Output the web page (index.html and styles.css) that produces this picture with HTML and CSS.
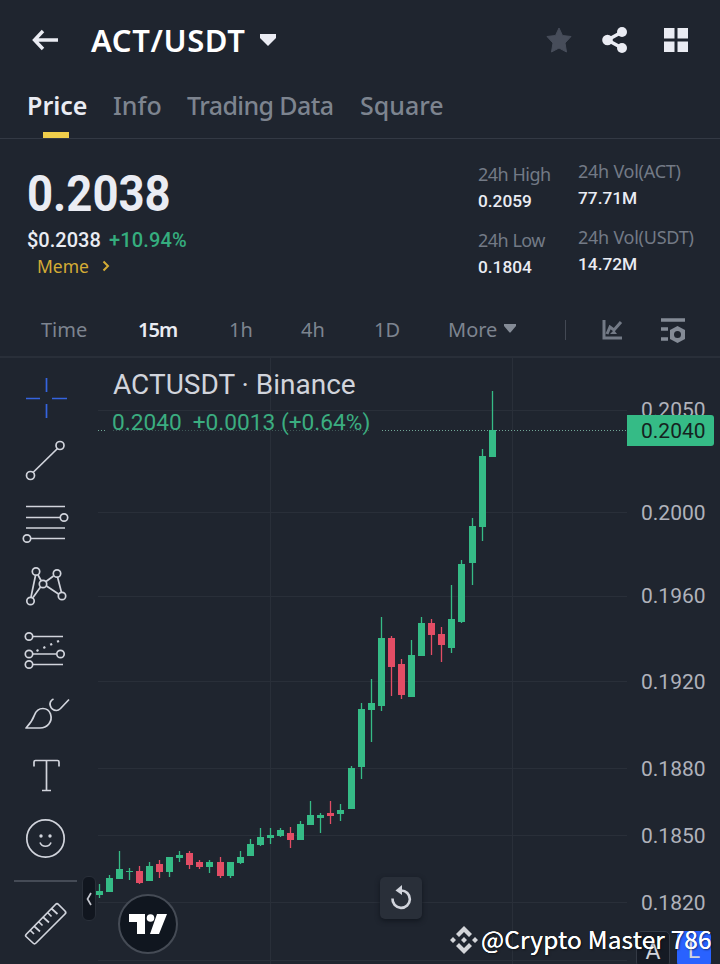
FILE: index.html
```html
<!DOCTYPE html>
<html lang="en">
<head>
<meta charset="utf-8">
<title>ACT/USDT</title>
<link rel="stylesheet" href="styles.css">
</head>
<body>
<main class="app">
  <header class="header">
    <svg class="back" width="28" height="24" viewBox="0 0 28 24"><path d="M27 12H4M12 3L3.500 12L12 21"/></svg>
    <h1 class="pair">ACT/USDT</h1>
    <svg class="caret" width="18" height="14" viewBox="0 0 18 14"><path d="M1 1H17V5L9 13L1 5Z"/></svg>
    <div class="actions">
      <svg class="star" width="28" height="28" viewBox="0 0 28 28"><path d="M14 2L17.500 9.500L26 10.500L20 17L21.500 26L14 22L6.500 26L8 17L2 10.500L10.500 9.500Z"/></svg>
      <svg class="share" width="28" height="28" viewBox="0 0 28 28"><path d="M21 6L6.500 14L21 22"/><circle cx="21" cy="6" r="5"/><circle cx="6.500" cy="14" r="5.300"/><circle cx="21" cy="22" r="5"/></svg>
      <svg class="grid-icon" width="24" height="24" viewBox="0 0 24 24"><path d="M0 0H10.500V10.500H0ZM13.500 0H24V10.500H13.500ZM0 13.500H10.500V24H0ZM13.500 13.500H24V24H13.500Z"/></svg>
    </div>
  </header>

  <nav class="tabs">
    <span class="tab active">Price</span>
    <span class="tab info">Info</span>
    <span class="tab data">Trading Data</span>
    <span class="tab square">Square</span>
  </nav>

  <section class="summary">
    <div class="quote">
      <div class="last">0.2038</div>
      <div class="fiat"><span class="usd">$0.2038</span><span class="change">+10.94%</span></div>
      <div class="tag"><span>Meme</span><svg width="8" height="12" viewBox="0 0 8 12"><path d="M1.500 1.500L6 6L1.500 10.500"/></svg></div>
    </div>
    <div class="stats prices">
      <div class="stat"><span class="label">24h High</span><span class="value">0.2059</span></div>
      <div class="stat"><span class="label">24h Low</span><span class="value">0.1804</span></div>
    </div>
    <div class="stats volumes">
      <div class="stat"><span class="label">24h Vol(ACT)</span><span class="value">77.71M</span></div>
      <div class="stat"><span class="label">24h Vol(USDT)</span><span class="value">14.72M</span></div>
    </div>
  </section>

  <nav class="intervals">
    <span class="iv time">Time</span>
    <span class="iv m15">15m</span>
    <span class="iv h1">1h</span>
    <span class="iv h4">4h</span>
    <span class="iv d1">1D</span>
    <span class="iv more">More</span>
    <svg class="more-caret" width="12" height="9" viewBox="0 0 12 9"><path d="M0 0H12V2L6.500 8.500H5.500L0 2Z"/></svg>
    <i class="divider"></i>
    <svg class="chart-icon" width="22" height="20" viewBox="0 0 22 20"><path d="M2 0V18H20M5 14L8 7L12 10L19 2" fill="none" stroke="#737a86" stroke-width="3"/><path d="M8 14L12 10L15 14Z" fill="#737a86"/></svg>
    <svg class="settings-icon" width="26" height="26" viewBox="0 0 26 26"><path d="M1 3H25M1 12H8M1 22H8" stroke="#848b96" stroke-width="3.600"/><path fill="#848b96" fill-rule="evenodd" d="M17.500 9L25 13V22L17.500 26L10 22V13ZM17.500 14A3.500 3.500 0 1 0 17.500 21A3.500 3.500 0 1 0 17.500 14Z"/></svg>
  </nav>

  <section class="board">
    <aside class="tools">
      <svg class="tool cross" viewBox="0 367 84 63"><path d="M46.500 378V392M46.500 404V418M26 398.500H40M52 398.500H67"/></svg>
      <svg class="tool" viewBox="0 430 84 63"><path d="M33 472.500L57.500 448.500"/><circle cx="30.500" cy="475.500" r="4"/><circle cx="60" cy="445.500" r="4"/></svg>
      <svg class="tool" viewBox="0 493 84 63"><path d="M26 506.500H65M26 517.500H60M26 528H65M31 538.500H65"/><circle cx="64" cy="517.500" r="3.700"/><circle cx="27" cy="538.500" r="3.700"/></svg>
      <svg class="tool" viewBox="0 556 84 63"><path d="M35.500 575.500L31 597M38 575L41 580.500M46 581.500L53.500 576M57.500 577L61.500 592.500M46.500 586L58.500 594M40.500 587L33 597.500"/><circle cx="36" cy="571.500" r="3.700"/><circle cx="57" cy="573.500" r="3.700"/><circle cx="43" cy="584" r="3.700"/><circle cx="30.500" cy="601" r="3.700"/><circle cx="62" cy="596" r="3.700"/></svg>
      <svg class="tool" viewBox="0 619 84 63"><path d="M33 636.500H63M33 654H56M33 664.500H63"/><path class="dots" d="M36.500 651L61 640"/><circle cx="29" cy="636.500" r="3.700"/><circle cx="29" cy="654" r="3.700"/><circle cx="60.500" cy="654" r="3.700"/><circle cx="29" cy="664.500" r="3.700"/></svg>
      <svg class="tool" viewBox="0 682 84 63"><path d="M26 728C31 723 33 719 34.500 715C38 706 48 707 50.500 714C53 722 47 728 40 728ZM53.500 699C47.500 702 50 710 56.500 710.500C58 710.500 59 710 60.500 708.500L69 699.500"/></svg>
      <svg class="tool" viewBox="0 745 84 63"><path d="M34 766.500V762Q34 760.500 35.500 760.500H57.500Q59 760.500 59 762V766.500M46.500 760.500V790.500M42 790.500H51"/></svg>
      <svg class="tool smile" viewBox="0 808 84 63"><circle cx="45.500" cy="838.500" r="18.700"/><path d="M40 842.500C42 847.500 49 847.500 51 842.500"/><circle class="eye" cx="41" cy="836" r="1.700"/><circle class="eye" cx="50" cy="836" r="1.700"/></svg>
      <i class="rule"></i>
      <svg class="tool ruler" viewBox="0 892 84 63"><path d="M26.500 934L55.500 904.500Q57 903 58.500 904.500L65 911Q66.500 912.500 65 914L36 943Q34.500 944.500 33 943L26 936.500Q25 935.500 26.500 934ZM30.500 930.500L34 934M34.500 926.500L40 931.500M39 922L42.500 925.500M43.500 917.500L49 922.500M48 913L51.500 916.500M52 909L57.500 914"/></svg>
    </aside>

    <div class="chart">
      <svg class="plot" width="636" height="607" viewBox="84 357 636 607">
        <path class="gridline" d="M98 410.500H627M98 512.500H627M98 596.500H627M98 681.500H627M98 768.500H627M98 835.500H627M98 902.500H627M98 960.500H627M270.500 358V964M512.500 358V964"/>
        <path class="price-line" d="M98 430.500H107M382 430.500H627"/>
        <path class="price-line faint" d="M113 430.500H370"/>
        <path class="wick up" d="M99.500 884V898M109.500 875V892M119.500 851V879M129.500 868V880M149.500 862V881M169.500 857V877M179.500 851V862M209.500 860V873M230.500 862V878M240.500 851V864M250.500 839V856M260.500 828V846M270.500 828V844M280.500 828V837M300.500 821V840M310.500 801V825M320.500 813V833M340.500 804V821M351.500 766V809M361.500 703V779M371.500 679V742M381.500 617V711M411.500 640V697M421.500 617V656M451.500 585V653M461.500 560V623M472.500 518V585M482.500 449V541M492.500 391V457"/>
        <path class="wick down" d="M139.500 866V884M159.500 860V878M189.500 851V869M199.500 860V869M220.500 857V878M290.500 827V848M330.500 801V824M391.500 636V696M401.500 659V699M431.500 619V655M441.500 627V662"/>
        <path class="body up" d="M99.500 891V895M109.500 878V892M119.500 869V879M129.500 871V872M149.500 866V881M169.500 857V872M179.500 855V858M209.500 862V867M230.500 862V876M240.500 857V863M250.500 844V856M260.500 837V845M270.500 835V838M280.500 830V836M300.500 824V840M310.500 815V825M320.500 815V818M340.500 810V814M351.500 768V809M361.500 709V767M371.500 703V710M381.500 638V706M411.500 655V697M421.500 623V656M451.500 619V648M461.500 564V622M472.500 526V563M482.500 456V527M492.500 430V457"/>
        <path class="body down" d="M139.500 871V883M159.500 864V872M189.500 853V865M199.500 862V867M220.500 862V876M290.500 833V840M330.500 813V816M391.500 638V667M401.500 664V695M431.500 623V635M441.500 634V645"/>
        <g class="axis">
          <text x="641" y="417">0.2050</text>
          <text x="641" y="520">0.2000</text>
          <text x="641" y="603">0.1960</text>
          <text x="641" y="689">0.1920</text>
          <text x="641" y="776">0.1880</text>
          <text x="641" y="843">0.1850</text>
          <text x="641" y="910">0.1820</text>
        </g>
        <path fill="#35bb86" d="M627 415H711Q714 415 714 418V443Q714 446 711 446H627Z"/>
        <text class="current" x="641" y="438">0.2040</text>
      </svg>
      <div class="legend">
        <div class="symbol">ACTUSDT · Binance</div>
        <div class="ohlc"><span>0.2040</span><span>+0.0013 (+0.64%)</span></div>
      </div>
      <div class="handle"><svg width="8" height="14" viewBox="0 0 8 14"><path d="M6 1L2.500 7L6 13"/></svg></div>
      <div class="tv"><svg width="38" height="20" viewBox="0 0 38 20"><path d="M0 0H16V20H8V8H0ZM28 0H38L30 20H21Z"/><circle cx="21.500" cy="4" r="3.800"/></svg></div>
      <div class="reset"><svg width="24" height="26" viewBox="0 0 24 26"><path class="arc" d="M3.500 13.500A8.700 8.700 0 1 0 12 5.500H9"/><path class="head" d="M13 0V10L6.500 5.500Z"/></svg></div>
      <div class="scales"><span class="scale auto">A</span><span class="scale log">L</span></div>
    </div>
  </section>

  <div class="credit">
    <svg width="28" height="28" viewBox="0 0 28 28"><path d="M14 0L22 8L19 11L14 6L9 11L6 8ZM14 28L22 20L19 17L14 22L9 17L6 20ZM3 11L6 14L3 17L0 14ZM25 11L28 14L25 17L22 14ZM14 11L17 14L14 17L11 14Z"/></svg>
    <span>@Crypto Master 786</span>
  </div>
</main>
</body>
</html>
```
FILE: styles.css
```css
* { box-sizing: border-box; }
body { margin: 0; background: #1f252f; color: #eaecf3; font-family: "Noto Sans", sans-serif; }
svg { display: block; flex: none; }
span, h1 { white-space: nowrap; }
.app { position: relative; width: 720px; height: 964px; overflow: hidden; display: flex; flex-direction: column; }

.header { height: 80px; display: flex; align-items: center; padding: 0 31px 0 31px; }
.back path { fill: none; stroke: #eaecf3; stroke-width: 3.4; }
.pair { margin: 0 0 0 32px; width: 154px; font-size: 31px; line-height: 40px; font-weight: 600; color: #fff; letter-spacing: 0.6px; }
.caret { margin-left: 14px; fill: #eaecf3; }
.actions { margin-left: auto; display: flex; align-items: center; }
.star { fill: #474d5a; stroke: #474d5a; stroke-width: 1; stroke-linejoin: round; }
.share { margin-left: 28px; fill: #eaecf3; }
.share path { fill: none; stroke: #eaecf3; stroke-width: 3.5; }
.grid-icon { margin-left: 35px; margin-right: 1px; fill: #eaecf3; }

.tabs { height: 59px; border-bottom: 1px solid #333944; display: flex; padding-left: 27px; }
.tab { position: relative; height: 58px; padding-top: 8px; font-size: 25px; line-height: 34px; font-weight: 500; color: #7d848f; }
.active { width: 86px; color: #eaecf3; font-weight: 600; }
.active::after { content: ""; position: absolute; left: 16px; bottom: 0; width: 26px; height: 6px; background: #f0ce4b; }
.info { width: 74px; }
.data { width: 173px; letter-spacing: -0.6px; }

.summary { height: 164px; display: flex; }
.quote { width: 478px; flex: none; padding: 26px 0 0 27px; }
.last { font: 700 50px/56px Roboto, sans-serif; transform: scaleX(0.91); transform-origin: left; margin-top: 1px; }
.fiat { display: flex; font: 500 20px/24px Roboto, sans-serif; margin-top: 6px; }
.usd { width: 82px; }
.change { color: #35ad7e; letter-spacing: 0.15px; }
.tag { display: flex; align-items: center; gap: 13px; margin-left: 10px; font-size: 17.5px; line-height: 28px; color: #d4ac35; }
.tag path { fill: none; stroke: #d4ac35; stroke-width: 2; }
.stats { display: flex; flex-direction: column; gap: 12px; }
.prices { width: 100px; flex: none; padding-top: 22px; }
.volumes { padding-top: 19px; }
.stat { height: 54px; display: flex; flex-direction: column; }
.label { font-size: 18px; line-height: 26px; color: #737a86; letter-spacing: -0.5px; }
.volumes .label { letter-spacing: -0.25px; }
.value { font: 500 17.3px/28px Roboto, sans-serif; }

.intervals { height: 55px; border-bottom: 2px solid #292f39; display: flex; align-items: center; padding-left: 41px; font-size: 20px; color: #7d848f; }
.iv { line-height: 28px; }
.time { width: 97px; }
.m15 { width: 91px; color: #eaecf3; font-weight: 600; letter-spacing: -0.9px; }
.h1 { width: 72px; }
.h4 { width: 73px; }
.d1 { width: 74px; }
.more { width: 56px; }
.more-caret { fill: #848b96; margin-top: -2px; }
.divider { width: 1px; height: 20px; margin-left: 49px; background: #434954; }
.chart-icon { margin-left: 36px; }
.settings-icon { margin-left: 36px; }

.board { height: 607px; margin-top: -1px; display: flex; }
.tools { width: 84px; padding-top: 10px; display: flex; flex-direction: column; }
.tool { width: 84px; height: 63px; fill: none; stroke: #d1d4dc; stroke-width: 1.7; stroke-linejoin: round; }
.cross { stroke: #3564df; }
.dots { stroke-width: 2.2; stroke-dasharray: 2.2 5.3; }
.eye { fill: #d1d4dc; stroke: none; }
.rule { height: 2px; width: 63px; margin: 9px 0 10px 14px; background: #454b56; }
.chart { position: relative; width: 636px; height: 607px; }
.gridline { fill: none; stroke: #292f39; stroke-width: 1; }
.price-line { stroke: #71a797; stroke-width: 1; stroke-dasharray: 1 2; }
.faint { opacity: .4; }
.wick { fill: none; stroke-width: 1.3; }
.body { fill: none; stroke-width: 7; }
.up { stroke: #35bb86; }
.down { stroke: #e34d65; }
.axis, .current { font: 400 21px Roboto, sans-serif; fill: #afb2bb; }
.current { fill: #15231f; }

.legend { position: absolute; left: 29px; top: 10px; font-family: Roboto, sans-serif; }
.symbol { font-size: 28px; line-height: 36px; color: #d1d4dc; }
.ohlc { display: flex; gap: 11px; margin: 5px 0 0 -1px; font-size: 22.7px; line-height: 30px; color: #3bad80; }
.handle { position: absolute; left: -2px; top: 519px; width: 14px; height: 45px; border: 1px solid #292f39; border-radius: 6px; background: #11161f; display: flex; align-items: center; justify-content: center; }
.handle path { fill: none; stroke: #c4c7cf; stroke-width: 1.7; }
.tv { position: absolute; left: 34px; top: 537px; width: 60px; height: 60px; border: 2px solid #454b55; border-radius: 50%; background: #10161f; display: flex; align-items: center; justify-content: center; }
.tv svg { fill: #fff; }
.reset { position: absolute; left: 296px; top: 520px; width: 42px; height: 42px; border-radius: 5px; background: #292f39; box-shadow: 0 2px 5px #12171f; display: flex; align-items: center; justify-content: center; }
.arc { fill: none; stroke: #d1d4dc; stroke-width: 2.6; }
.head { fill: #d1d4dc; }
.scales { position: absolute; left: 552px; top: 574px; display: flex; gap: 7px; }
.scale { width: 34px; height: 36px; border-radius: 5px; font: 400 23px/40px Roboto, sans-serif; text-align: center; color: #d1d4dc; }
.auto { background: #151a24; border: 1px solid #343a45; }
.log { background: #2962ff; }
.credit { position: absolute; left: 450px; top: 922px; display: flex; align-items: center; gap: 3px; height: 36px; font: 400 24.4px/34px "Noto Sans CJK SC", sans-serif; letter-spacing: 0.18px; color: #fff; text-shadow: 0 0 0.6px #fff, 1px 1px 2px #0008; }
.credit span { margin-top: -2px; }
.credit svg { fill: #d3d5d9; }
```
